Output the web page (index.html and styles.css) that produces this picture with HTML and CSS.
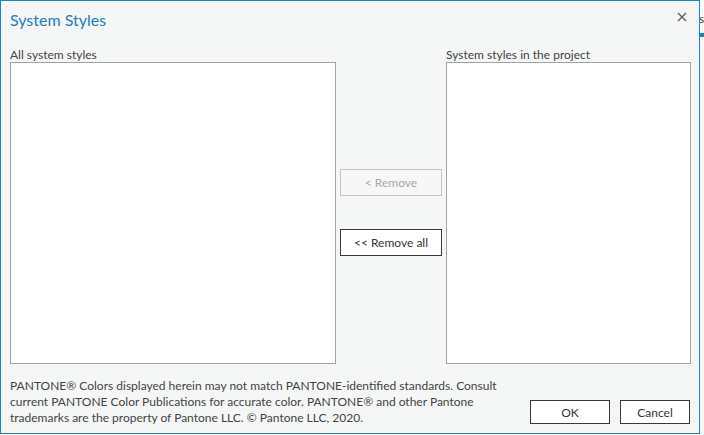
FILE: index.html
```html
<!DOCTYPE html>
<html>
<head>
<meta charset="utf-8">
<link rel="stylesheet" href="styles.css">
</head>
<body>
<div class="page">
  <div class="dialog">
    <div class="titlebar">
      <span class="title">System Styles</span>
      <svg class="close" width="10" height="10" viewBox="0 0 10 10"><path d="M1 1 L9 9 M9 1 L1 9" stroke="#5a5a5a" stroke-width="1.3" fill="none"/></svg>
    </div>
    <div class="main">
      <div class="label">All system styles</div>
      <div></div>
      <div class="label">System styles in the project</div>
      <div class="list"></div>
      <div class="middle">
        <button class="btn disabled">&lt; Remove</button>
        <button class="btn">&lt;&lt; Remove all</button>
      </div>
      <div class="list"></div>
    </div>
    <div class="footer">
      <p class="notice">PANTONE® Colors displayed herein may not match PANTONE-identified standards. Consult<br>current PANTONE Color Publications for accurate color. PANTONE® and other Pantone<br>trademarks are the property of Pantone LLC. © Pantone LLC, 2020.</p>
      <div class="actions">
        <button class="btn ok">OK</button>
        <button class="btn cancel">Cancel</button>
      </div>
    </div>
  </div>
  <div class="strip">
    <div class="strip-top"><span>s</span></div>
    <div class="strip-bar"></div>
    <div class="strip-rest"></div>
  </div>
</div>
</body>
</html>
```

FILE: styles.css
```css
html, body {
  margin: 0;
  padding: 0;
  background: #f3f3f3;
}
body {
  font-family: Lato, "Noto Sans", "Liberation Sans", sans-serif;
  color: #444;
}
.page {
  display: flex;
  width: 704px;
  height: 435px;
  overflow: hidden;
}
.dialog {
  width: 700px;
  height: 434px;
  flex: none;
  box-sizing: border-box;
  border: 1px solid #1f7fd1;
  background: #f5f6f6;
  padding: 0 8px 0 9px;
  display: flex;
  flex-direction: column;
}
.titlebar {
  flex: none;
  height: 46px;
  display: flex;
  justify-content: space-between;
  align-items: flex-start;
}
.title {
  margin-top: 8px;
  font-size: 16px;
  line-height: 22px;
  color: #1c7cc7;
  font-weight: 400;
}
.close {
  margin-top: 11px;
  margin-right: 4px;
}
.main {
  flex: none;
  display: grid;
  grid-template-columns: 326px 110px 245px;
  grid-template-rows: 15px 302px;
}
.label {
  font-size: 12px;
  line-height: 15px;
  white-space: nowrap;
}
.list {
  background: #fff;
  border: 1px solid #a3a3a3;
  box-sizing: border-box;
}
.middle {
  display: flex;
  flex-direction: column;
  align-items: center;
  padding-top: 107px;
  gap: 33px;
}
.btn {
  font-family: inherit;
  font-size: 12px;
  color: #333;
  background: #fff;
  border: 1px solid #3a3a3a;
  border-radius: 0;
  padding: 0;
  margin: 0;
  box-sizing: border-box;
}
.middle .btn {
  width: 102px;
  height: 27px;
}
.btn.disabled {
  color: #a8a8a8;
  border-color: #c4c4c4;
  background: #f7f7f7;
}
.footer {
  flex: 1;
  min-height: 0;
  display: flex;
  justify-content: space-between;
  align-items: flex-end;
  padding-bottom: 9px;
}
.notice {
  margin: 0 0 -2px 0;
  font-size: 12px;
  line-height: 16px;
  white-space: nowrap;
}
.actions {
  display: flex;
  gap: 10px;
  padding-right: 1px;
}
.ok {
  width: 80px;
  height: 24px;
}
.cancel {
  width: 70px;
  height: 24px;
}
.strip {
  width: 4px;
  flex: none;
  display: flex;
  flex-direction: column;
  overflow: hidden;
}
.strip-top {
  height: 33px;
  background: #fbfbfb;
  font-size: 12px;
  line-height: 14px;
  color: #444;
  padding-top: 12px;
  box-sizing: border-box;
  margin-left: -1px;
}
.strip-bar {
  height: 4px;
  background: #1f7fd1;
}
.strip-rest {
  flex: 1;
  background: #f5f6f6;
}
```
